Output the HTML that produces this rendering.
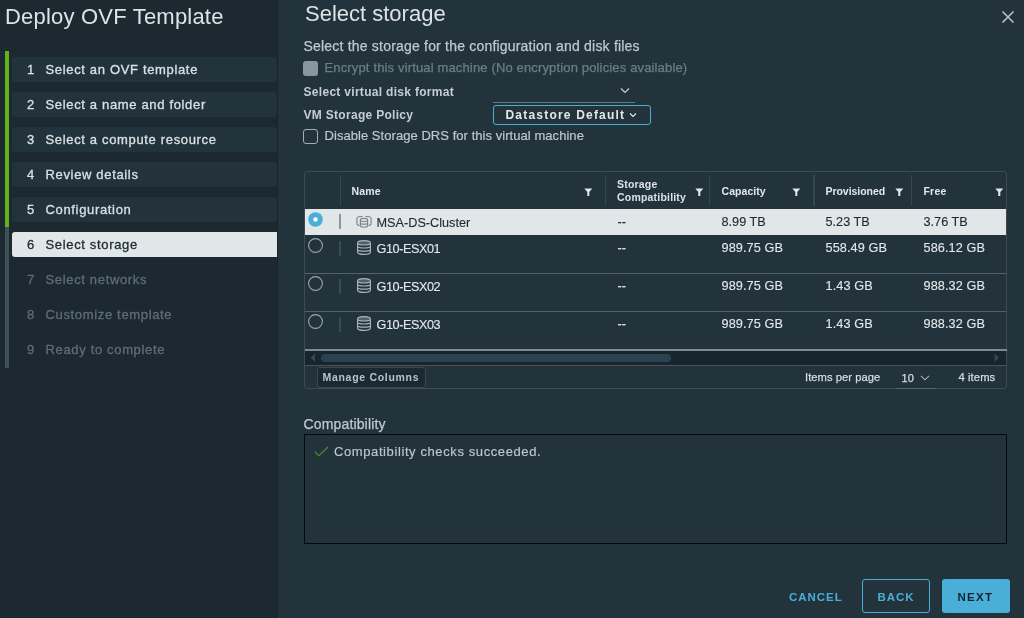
<!DOCTYPE html>
<html><head><meta charset="utf-8"><style>
html,body{margin:0;padding:0;width:1024px;height:618px;overflow:hidden;background:#22333b;}
body{position:relative;font-family:"Liberation Sans",sans-serif;}
#w{position:absolute;left:0;top:0;width:1024px;height:618px;filter:blur(0.3px);}
.t{position:absolute;white-space:nowrap;line-height:normal;}
</style></head><body><div id="w">
<div style="position:absolute;left:0px;top:0px;width:278px;height:618px;background:#1c2931"></div>
<div style="position:absolute;left:277px;top:0px;width:1px;height:618px;background:#17242b"></div>
<div class="t" style="left:5px;top:4px;font-size:22px;font-weight:normal;color:#dde3e6;letter-spacing:0.2px;">Deploy OVF Template</div>
<div style="position:absolute;left:5px;top:51px;width:4px;height:176px;background:#62b219"></div>
<div style="position:absolute;left:5px;top:227px;width:4px;height:141px;background:#414f56"></div>
<div style="position:absolute;left:12px;top:57px;width:264.6px;height:25px;background:#22333b;border-radius:3px"></div>
<div class="t" style="left:27px;top:62px;font-size:13px;font-weight:normal;color:#d9e0e3;letter-spacing:0.6px;-webkit-text-stroke:0.3px #d9e0e3;">1</div>
<div class="t" style="left:45.5px;top:62px;font-size:13px;font-weight:normal;color:#d9e0e3;letter-spacing:0.66px;-webkit-text-stroke:0.3px #d9e0e3;">Select an OVF template</div>
<div style="position:absolute;left:12px;top:92px;width:264.6px;height:25px;background:#22333b;border-radius:3px"></div>
<div class="t" style="left:27px;top:97px;font-size:13px;font-weight:normal;color:#d9e0e3;letter-spacing:0.6px;-webkit-text-stroke:0.3px #d9e0e3;">2</div>
<div class="t" style="left:45.5px;top:97px;font-size:13px;font-weight:normal;color:#d9e0e3;letter-spacing:0.66px;-webkit-text-stroke:0.3px #d9e0e3;">Select a name and folder</div>
<div style="position:absolute;left:12px;top:127px;width:264.6px;height:25px;background:#22333b;border-radius:3px"></div>
<div class="t" style="left:27px;top:132px;font-size:13px;font-weight:normal;color:#d9e0e3;letter-spacing:0.6px;-webkit-text-stroke:0.3px #d9e0e3;">3</div>
<div class="t" style="left:45.5px;top:132px;font-size:13px;font-weight:normal;color:#d9e0e3;letter-spacing:0.66px;-webkit-text-stroke:0.3px #d9e0e3;">Select a compute resource</div>
<div style="position:absolute;left:12px;top:162px;width:264.6px;height:25px;background:#22333b;border-radius:3px"></div>
<div class="t" style="left:27px;top:167px;font-size:13px;font-weight:normal;color:#d9e0e3;letter-spacing:0.6px;-webkit-text-stroke:0.3px #d9e0e3;">4</div>
<div class="t" style="left:45.5px;top:167px;font-size:13px;font-weight:normal;color:#d9e0e3;letter-spacing:0.66px;-webkit-text-stroke:0.3px #d9e0e3;">Review details</div>
<div style="position:absolute;left:12px;top:197px;width:264.6px;height:25px;background:#22333b;border-radius:3px"></div>
<div class="t" style="left:27px;top:202px;font-size:13px;font-weight:normal;color:#d9e0e3;letter-spacing:0.6px;-webkit-text-stroke:0.3px #d9e0e3;">5</div>
<div class="t" style="left:45.5px;top:202px;font-size:13px;font-weight:normal;color:#d9e0e3;letter-spacing:0.66px;-webkit-text-stroke:0.3px #d9e0e3;">Configuration</div>
<div style="position:absolute;left:12px;top:232px;width:265px;height:25px;background:#e1e6e9;border-radius:3px 0 0 3px"></div>
<div class="t" style="left:27px;top:237px;font-size:13px;font-weight:normal;color:#1b2a32;letter-spacing:0.6px;-webkit-text-stroke:0.3px #1b2a32;">6</div>
<div class="t" style="left:45.5px;top:237px;font-size:13px;font-weight:normal;color:#1b2a32;letter-spacing:0.66px;-webkit-text-stroke:0.3px #1b2a32;">Select storage</div>
<div class="t" style="left:27px;top:272px;font-size:13px;font-weight:normal;color:#5e6d75;letter-spacing:0.6px;-webkit-text-stroke:0.3px #5e6d75;">7</div>
<div class="t" style="left:45.5px;top:272px;font-size:13px;font-weight:normal;color:#5e6d75;letter-spacing:0.66px;-webkit-text-stroke:0.3px #5e6d75;">Select networks</div>
<div class="t" style="left:27px;top:307px;font-size:13px;font-weight:normal;color:#5e6d75;letter-spacing:0.6px;-webkit-text-stroke:0.3px #5e6d75;">8</div>
<div class="t" style="left:45.5px;top:307px;font-size:13px;font-weight:normal;color:#5e6d75;letter-spacing:0.66px;-webkit-text-stroke:0.3px #5e6d75;">Customize template</div>
<div class="t" style="left:27px;top:342px;font-size:13px;font-weight:normal;color:#5e6d75;letter-spacing:0.6px;-webkit-text-stroke:0.3px #5e6d75;">9</div>
<div class="t" style="left:45.5px;top:342px;font-size:13px;font-weight:normal;color:#5e6d75;letter-spacing:0.66px;-webkit-text-stroke:0.3px #5e6d75;">Ready to complete</div>
<div style="position:absolute;left:278px;top:0px;width:746px;height:618px;background:#22333b"></div>
<div class="t" style="left:305px;top:1px;font-size:22px;font-weight:normal;color:#dde3e6;letter-spacing:0px;">Select storage</div>
<svg style="position:absolute;left:1001px;top:10px" width="14" height="14" viewBox="0 0 14 14"><path d="M1.5 1.5L12.5 12.5M12.5 1.5L1.5 12.5" stroke="#b8c2c8" stroke-width="1.6"/></svg>
<div class="t" style="left:303.5px;top:37.5px;font-size:14px;font-weight:normal;color:#bfc9ce;letter-spacing:0.2px;-webkit-text-stroke:0.25px #bfc9ce;">Select the storage for the configuration and disk files</div>
<div style="position:absolute;left:303px;top:61px;width:15px;height:15px;background:#8a979e;border-radius:3px;box-sizing:border-box"></div>
<div class="t" style="left:324.5px;top:60px;font-size:13px;font-weight:normal;color:#6d7d85;letter-spacing:0.15px;-webkit-text-stroke:0.25px #6d7d85;">Encrypt this virtual machine (No encryption policies available)</div>
<div class="t" style="left:303.5px;top:84.5px;font-size:12px;font-weight:bold;color:#c5ced3;letter-spacing:0.3px;">Select virtual disk format</div>
<div style="position:absolute;left:493px;top:102px;width:142px;height:1px;background:#6a787f"></div>
<svg style="position:absolute;left:620px;top:87px" width="10" height="7" viewBox="0 0 10 7"><path d="M1 1.5L5 5.5L9 1.5" stroke="#c5ced3" stroke-width="1.2" fill="none"/></svg>
<div class="t" style="left:303.5px;top:107.5px;font-size:12px;font-weight:bold;color:#c5ced3;letter-spacing:0.3px;">VM Storage Policy</div>
<div style="position:absolute;left:493px;top:105px;width:158px;height:20px;border:1px solid #49afd9;border-radius:3px;box-sizing:border-box"></div>
<div class="t" style="left:505.5px;top:107.5px;font-size:12px;font-weight:bold;color:#e3e8eb;letter-spacing:1.2px;">Datastore Default</div>
<svg style="position:absolute;left:629px;top:112px" width="8" height="6" viewBox="0 0 8 6"><path d="M1 1.5L4 4.5L7 1.5" stroke="#e3e8eb" stroke-width="1.2" fill="none"/></svg>
<div style="position:absolute;left:303px;top:129px;width:15px;height:15px;border:1px solid #a3aeb4;border-radius:3px;box-sizing:border-box"></div>
<div class="t" style="left:324.5px;top:128px;font-size:13px;font-weight:normal;color:#bfc9ce;letter-spacing:0.05px;-webkit-text-stroke:0.18px #bfc9ce;">Disable Storage DRS for this virtual machine</div>
<div style="position:absolute;left:303.5px;top:170.5px;width:703.5px;height:218.5px;border:1px solid #3c4b54;border-radius:3px;box-sizing:border-box"></div>
<div style="position:absolute;left:339.5px;top:175px;width:1.4px;height:31px;background:#37474f"></div>
<div style="position:absolute;left:605px;top:175px;width:1.4px;height:31px;background:#37474f"></div>
<div style="position:absolute;left:709px;top:175px;width:1.4px;height:31px;background:#37474f"></div>
<div style="position:absolute;left:813.3px;top:175px;width:1.4px;height:31px;background:#37474f"></div>
<div style="position:absolute;left:910.8px;top:175px;width:1.4px;height:31px;background:#37474f"></div>
<div class="t" style="left:351.5px;top:184.5px;font-size:10.5px;font-weight:bold;color:#e3e8eb;letter-spacing:0.2px;">Name</div>
<div class="t" style="left:721.5px;top:184.5px;font-size:10.5px;font-weight:bold;color:#e3e8eb;letter-spacing:0.05px;">Capacity</div>
<div class="t" style="left:825.5px;top:184.5px;font-size:10.5px;font-weight:bold;color:#e3e8eb;letter-spacing:-0.05px;">Provisioned</div>
<div class="t" style="left:923.5px;top:184.5px;font-size:10.5px;font-weight:bold;color:#e3e8eb;letter-spacing:0.2px;">Free</div>
<svg style="position:absolute;left:584px;top:188px" width="9" height="9" viewBox="0 0 9 9"><path d="M0.3 0.4H8.3L5.3 3.9V7.9H3.3V3.9Z" fill="#e3e8eb"/></svg>
<svg style="position:absolute;left:695px;top:188px" width="9" height="9" viewBox="0 0 9 9"><path d="M0.3 0.4H8.3L5.3 3.9V7.9H3.3V3.9Z" fill="#e3e8eb"/></svg>
<svg style="position:absolute;left:792px;top:188px" width="9" height="9" viewBox="0 0 9 9"><path d="M0.3 0.4H8.3L5.3 3.9V7.9H3.3V3.9Z" fill="#e3e8eb"/></svg>
<svg style="position:absolute;left:895px;top:188px" width="9" height="9" viewBox="0 0 9 9"><path d="M0.3 0.4H8.3L5.3 3.9V7.9H3.3V3.9Z" fill="#e3e8eb"/></svg>
<svg style="position:absolute;left:994.5px;top:188px" width="9" height="9" viewBox="0 0 9 9"><path d="M0.3 0.4H8.3L5.3 3.9V7.9H3.3V3.9Z" fill="#e3e8eb"/></svg>
<div class="t" style="left:617px;top:177.5px;font-size:10.5px;font-weight:bold;color:#dde3e6;letter-spacing:0.2px;">Storage</div>
<div class="t" style="left:617px;top:190.5px;font-size:10.5px;font-weight:bold;color:#dde3e6;letter-spacing:0.2px;">Compatibility</div>
<div style="position:absolute;left:305px;top:209px;width:701px;height:26px;background:#e1e6e9"></div>
<svg style="position:absolute;left:308px;top:212.3px" width="16" height="16" viewBox="0 0 16 16"><circle cx="7.5" cy="7.5" r="7.3" fill="#49afd9"/><circle cx="7.5" cy="7.5" r="2.2" fill="#fff"/></svg>
<div style="position:absolute;left:339.2px;top:214px;width:1.7px;height:15px;background:#8a979e"></div>
<svg style="position:absolute;left:353px;top:212px" width="22" height="19" viewBox="0 0 22 19"><g fill="none" stroke="#7b858a" stroke-width="1.15"><path d="M9.6 4.6C6.5 4.3 3.9 4.6 3.9 6.6V11.6C3.9 12.9 5 13.4 6.6 13.7"/><path d="M12.4 4.6C15.5 4.3 18.1 4.6 18.1 6.6V11.6C18.1 12.9 17 13.4 15.4 13.7"/><path d="M7.4 7.6C7.4 6.6 9 6.3 11 6.3C13 6.3 14.6 6.6 14.6 7.6V13.8C14.6 14.9 13 15.2 11 15.2C9 15.2 7.4 14.9 7.4 13.8Z"/><path d="M7.4 8.3C7.4 9.2 9 9.5 11 9.5C13 9.5 14.6 9.2 14.6 8.3M7.4 10.9C7.4 11.8 9 12.1 11 12.1C13 12.1 14.6 11.8 14.6 10.9"/></g></svg>
<div class="t" style="left:376.5px;top:215.5px;font-size:12.7px;font-weight:normal;color:#1b2a32;letter-spacing:0px;-webkit-text-stroke:0.12px #1b2a32;">MSA-DS-Cluster</div>
<div class="t" style="left:617.5px;top:214.5px;font-size:12.7px;font-weight:normal;color:#1b2a32;letter-spacing:0px;-webkit-text-stroke:0.12px #1b2a32;">--</div>
<div class="t" style="left:721.5px;top:214.5px;font-size:12.7px;font-weight:normal;color:#1b2a32;letter-spacing:0px;-webkit-text-stroke:0.12px #1b2a32;">8.99 TB</div>
<div class="t" style="left:825.5px;top:214.5px;font-size:12.7px;font-weight:normal;color:#1b2a32;letter-spacing:0px;-webkit-text-stroke:0.12px #1b2a32;">5.23 TB</div>
<div class="t" style="left:923.5px;top:214.5px;font-size:12.7px;font-weight:normal;color:#1b2a32;letter-spacing:0px;-webkit-text-stroke:0.12px #1b2a32;">3.76 TB</div>
<svg style="position:absolute;left:308px;top:238.3px" width="16" height="16" viewBox="0 0 16 16"><circle cx="7.5" cy="7.5" r="6.9" fill="none" stroke="#9aa6ad" stroke-width="1.1"/></svg>
<div style="position:absolute;left:339.2px;top:241px;width:1.6px;height:15px;background:#3a4a52"></div>
<svg style="position:absolute;left:357px;top:240px" width="14" height="15" viewBox="0 0 14 15"><g fill="none" stroke="#a9b4ba" stroke-width="1.2"><path d="M0.6 3C0.6 1.2 3.5 0.6 7 0.6C10.5 0.6 13.4 1.2 13.4 3V3.6C13.4 4.6 10.5 5 7 5C3.5 5 0.6 4.6 0.6 3.6Z" fill="rgba(169,180,186,0.35)" stroke="none"/><path d="M0.6 3C0.6 1.2 3.5 0.6 7 0.6C10.5 0.6 13.4 1.2 13.4 3V12C13.4 13.8 10.5 14.4 7 14.4C3.5 14.4 0.6 13.8 0.6 12Z"/><path d="M0.6 3.6C0.6 4.6 3.5 5 7 5C10.5 5 13.4 4.6 13.4 3.6"/><path d="M0.6 6.6C0.6 7.6 3.5 8 7 8C10.5 8 13.4 7.6 13.4 6.6"/><path d="M0.6 9.8C0.6 10.8 3.5 11.2 7 11.2C10.5 11.2 13.4 10.8 13.4 9.8"/></g></svg>
<div class="t" style="left:376.5px;top:241.5px;font-size:12.7px;font-weight:normal;color:#e3e8eb;letter-spacing:-0.45px;-webkit-text-stroke:0.12px #e3e8eb;">G10-ESX01</div>
<div class="t" style="left:617.5px;top:240.5px;font-size:12.7px;font-weight:normal;color:#e3e8eb;letter-spacing:0px;-webkit-text-stroke:0.12px #e3e8eb;">--</div>
<div class="t" style="left:721.5px;top:240.5px;font-size:12.7px;font-weight:normal;color:#e3e8eb;letter-spacing:0.1px;-webkit-text-stroke:0.12px #e3e8eb;">989.75 GB</div>
<div class="t" style="left:825.5px;top:240.5px;font-size:12.7px;font-weight:normal;color:#e3e8eb;letter-spacing:0.1px;-webkit-text-stroke:0.12px #e3e8eb;">558.49 GB</div>
<div class="t" style="left:923.5px;top:240.5px;font-size:12.7px;font-weight:normal;color:#e3e8eb;letter-spacing:0.1px;-webkit-text-stroke:0.12px #e3e8eb;">586.12 GB</div>
<div style="position:absolute;left:305px;top:273px;width:701px;height:1px;background:#52626a"></div>
<svg style="position:absolute;left:308px;top:276.3px" width="16" height="16" viewBox="0 0 16 16"><circle cx="7.5" cy="7.5" r="6.9" fill="none" stroke="#9aa6ad" stroke-width="1.1"/></svg>
<div style="position:absolute;left:339.2px;top:279px;width:1.6px;height:15px;background:#3a4a52"></div>
<svg style="position:absolute;left:357px;top:278px" width="14" height="15" viewBox="0 0 14 15"><g fill="none" stroke="#a9b4ba" stroke-width="1.2"><path d="M0.6 3C0.6 1.2 3.5 0.6 7 0.6C10.5 0.6 13.4 1.2 13.4 3V3.6C13.4 4.6 10.5 5 7 5C3.5 5 0.6 4.6 0.6 3.6Z" fill="rgba(169,180,186,0.35)" stroke="none"/><path d="M0.6 3C0.6 1.2 3.5 0.6 7 0.6C10.5 0.6 13.4 1.2 13.4 3V12C13.4 13.8 10.5 14.4 7 14.4C3.5 14.4 0.6 13.8 0.6 12Z"/><path d="M0.6 3.6C0.6 4.6 3.5 5 7 5C10.5 5 13.4 4.6 13.4 3.6"/><path d="M0.6 6.6C0.6 7.6 3.5 8 7 8C10.5 8 13.4 7.6 13.4 6.6"/><path d="M0.6 9.8C0.6 10.8 3.5 11.2 7 11.2C10.5 11.2 13.4 10.8 13.4 9.8"/></g></svg>
<div class="t" style="left:376.5px;top:279.5px;font-size:12.7px;font-weight:normal;color:#e3e8eb;letter-spacing:-0.45px;-webkit-text-stroke:0.12px #e3e8eb;">G10-ESX02</div>
<div class="t" style="left:617.5px;top:278.5px;font-size:12.7px;font-weight:normal;color:#e3e8eb;letter-spacing:0px;-webkit-text-stroke:0.12px #e3e8eb;">--</div>
<div class="t" style="left:721.5px;top:278.5px;font-size:12.7px;font-weight:normal;color:#e3e8eb;letter-spacing:0.1px;-webkit-text-stroke:0.12px #e3e8eb;">989.75 GB</div>
<div class="t" style="left:825.5px;top:278.5px;font-size:12.7px;font-weight:normal;color:#e3e8eb;letter-spacing:0.1px;-webkit-text-stroke:0.12px #e3e8eb;">1.43 GB</div>
<div class="t" style="left:923.5px;top:278.5px;font-size:12.7px;font-weight:normal;color:#e3e8eb;letter-spacing:0.1px;-webkit-text-stroke:0.12px #e3e8eb;">988.32 GB</div>
<div style="position:absolute;left:305px;top:311px;width:701px;height:1px;background:#52626a"></div>
<svg style="position:absolute;left:308px;top:314.3px" width="16" height="16" viewBox="0 0 16 16"><circle cx="7.5" cy="7.5" r="6.9" fill="none" stroke="#9aa6ad" stroke-width="1.1"/></svg>
<div style="position:absolute;left:339.2px;top:317px;width:1.6px;height:15px;background:#3a4a52"></div>
<svg style="position:absolute;left:357px;top:316px" width="14" height="15" viewBox="0 0 14 15"><g fill="none" stroke="#a9b4ba" stroke-width="1.2"><path d="M0.6 3C0.6 1.2 3.5 0.6 7 0.6C10.5 0.6 13.4 1.2 13.4 3V3.6C13.4 4.6 10.5 5 7 5C3.5 5 0.6 4.6 0.6 3.6Z" fill="rgba(169,180,186,0.35)" stroke="none"/><path d="M0.6 3C0.6 1.2 3.5 0.6 7 0.6C10.5 0.6 13.4 1.2 13.4 3V12C13.4 13.8 10.5 14.4 7 14.4C3.5 14.4 0.6 13.8 0.6 12Z"/><path d="M0.6 3.6C0.6 4.6 3.5 5 7 5C10.5 5 13.4 4.6 13.4 3.6"/><path d="M0.6 6.6C0.6 7.6 3.5 8 7 8C10.5 8 13.4 7.6 13.4 6.6"/><path d="M0.6 9.8C0.6 10.8 3.5 11.2 7 11.2C10.5 11.2 13.4 10.8 13.4 9.8"/></g></svg>
<div class="t" style="left:376.5px;top:317.5px;font-size:12.7px;font-weight:normal;color:#e3e8eb;letter-spacing:-0.45px;-webkit-text-stroke:0.12px #e3e8eb;">G10-ESX03</div>
<div class="t" style="left:617.5px;top:316.5px;font-size:12.7px;font-weight:normal;color:#e3e8eb;letter-spacing:0px;-webkit-text-stroke:0.12px #e3e8eb;">--</div>
<div class="t" style="left:721.5px;top:316.5px;font-size:12.7px;font-weight:normal;color:#e3e8eb;letter-spacing:0.1px;-webkit-text-stroke:0.12px #e3e8eb;">989.75 GB</div>
<div class="t" style="left:825.5px;top:316.5px;font-size:12.7px;font-weight:normal;color:#e3e8eb;letter-spacing:0.1px;-webkit-text-stroke:0.12px #e3e8eb;">1.43 GB</div>
<div class="t" style="left:923.5px;top:316.5px;font-size:12.7px;font-weight:normal;color:#e3e8eb;letter-spacing:0.1px;-webkit-text-stroke:0.12px #e3e8eb;">988.32 GB</div>
<div style="position:absolute;left:304.5px;top:349px;width:702px;height:1.5px;background:#7d8a91"></div>
<div style="position:absolute;left:305px;top:351px;width:701px;height:14px;background:#18252c"></div>
<div style="position:absolute;left:321px;top:353.5px;width:350px;height:8.5px;background:#2b4250;border-radius:4px"></div>
<svg style="position:absolute;left:310px;top:353px" width="6" height="10" viewBox="0 0 6 10"><path d="M5 0.5V9L0.5 4.75Z" fill="#31495a"/></svg>
<svg style="position:absolute;left:994px;top:353px" width="6" height="10" viewBox="0 0 6 10"><path d="M0.5 0.5V9L5 4.75Z" fill="#31495a"/></svg>
<div style="position:absolute;left:305px;top:365px;width:701px;height:1px;background:#46555d"></div>
<div style="position:absolute;left:316.5px;top:366.5px;width:109px;height:21px;background:#1b2a32;border:1px solid #3a4950;border-radius:3px;box-sizing:border-box"></div>
<div class="t" style="left:322.5px;top:371px;font-size:10.5px;font-weight:bold;color:#b6c4cc;letter-spacing:0.7px;">Manage Columns</div>
<div class="t" style="left:805px;top:371px;font-size:11.2px;font-weight:normal;color:#d5dde1;letter-spacing:0.05px;-webkit-text-stroke:0.25px #d5dde1;">Items per page</div>
<div class="t" style="left:901.5px;top:372px;font-size:11px;font-weight:normal;color:#d5dde1;letter-spacing:0.2px;-webkit-text-stroke:0.25px #d5dde1;">10</div>
<svg style="position:absolute;left:920px;top:375px" width="10" height="6" viewBox="0 0 10 6"><path d="M1 0.8L5 4.8L9 0.8" stroke="#aab4ba" stroke-width="1.1" fill="none"/></svg>
<div style="position:absolute;left:896px;top:388px;width:40px;height:1.2px;background:#56656c"></div>
<div class="t" style="left:958.5px;top:371px;font-size:11.2px;font-weight:normal;color:#d5dde1;letter-spacing:0.1px;-webkit-text-stroke:0.25px #d5dde1;">4 items</div>
<div class="t" style="left:303.5px;top:416px;font-size:14px;font-weight:normal;color:#bfc9ce;letter-spacing:0.15px;-webkit-text-stroke:0.25px #bfc9ce;">Compatibility</div>
<div style="position:absolute;left:303.5px;top:434px;width:703.5px;height:110px;border:1px solid #050a0c;box-sizing:border-box"></div>
<svg style="position:absolute;left:314px;top:446px" width="15" height="11" viewBox="0 0 15 11"><path d="M0.8 5.6L4.8 9.8L14 1" stroke="#52932a" stroke-width="1.15" fill="none"/></svg>
<div class="t" style="left:334px;top:444px;font-size:13px;font-weight:normal;color:#bfc9ce;letter-spacing:0.6px;-webkit-text-stroke:0.15px #bfc9ce;">Compatibility checks succeeded.</div>
<div class="t" style="left:789px;top:591px;font-size:11.5px;font-weight:bold;color:#49afd9;letter-spacing:0.95px;">CANCEL</div>
<div style="position:absolute;left:862px;top:579px;width:68px;height:34px;border:1px solid #49afd9;border-radius:3px;box-sizing:border-box"></div>
<div class="t" style="left:877.5px;top:591px;font-size:11.5px;font-weight:bold;color:#49afd9;letter-spacing:0.95px;">BACK</div>
<div style="position:absolute;left:941.5px;top:579px;width:68.5px;height:34px;background:#49afd9;border-radius:3px"></div>
<div class="t" style="left:957.5px;top:591px;font-size:11.5px;font-weight:bold;color:#14232b;letter-spacing:1.3px;">NEXT</div>
</div></body></html>
